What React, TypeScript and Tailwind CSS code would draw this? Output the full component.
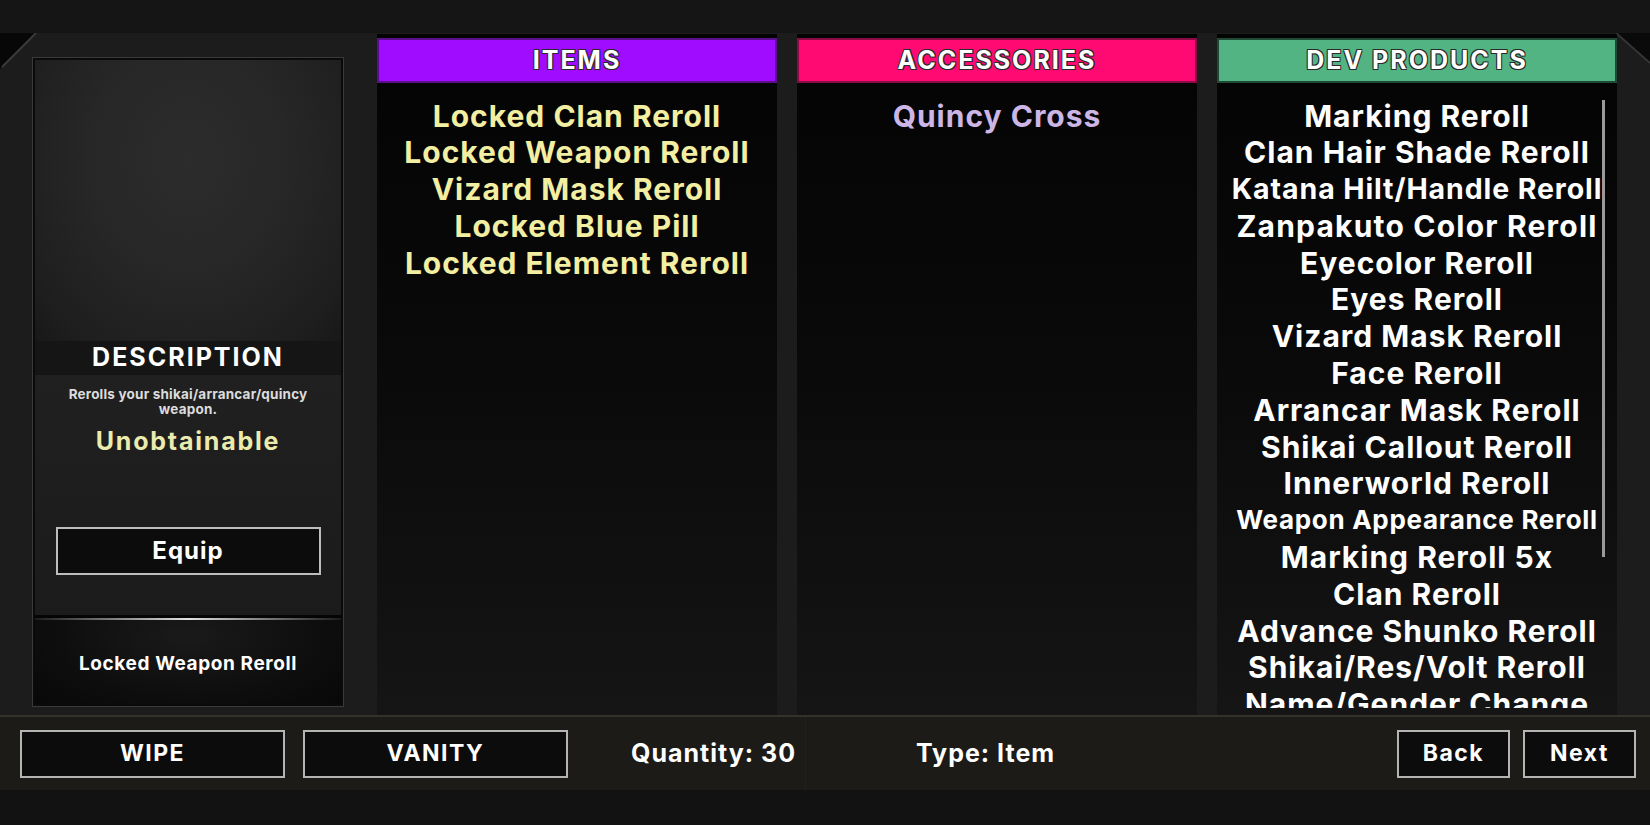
import React from "react";

type Row = { label: string; size?: number; track?: number };

const ITEMS: Row[] = [
  { label: "Locked Clan Reroll" },
  { label: "Locked Weapon Reroll" },
  { label: "Vizard Mask Reroll" },
  { label: "Locked Blue Pill" },
  { label: "Locked Element Reroll" },
];

const ACCESSORIES: Row[] = [{ label: "Quincy Cross" }];

const DEV: Row[] = [
  { label: "Marking Reroll" },
  { label: "Clan Hair Shade Reroll" },
  { label: "Katana Hilt/Handle Reroll", size: 28.5, track: 0.9 },
  { label: "Zanpakuto Color Reroll", size: 30, track: 1.2 },
  { label: "Eyecolor Reroll" },
  { label: "Eyes Reroll" },
  { label: "Vizard Mask Reroll" },
  { label: "Face Reroll" },
  { label: "Arrancar Mask Reroll" },
  { label: "Shikai Callout Reroll" },
  { label: "Innerworld Reroll" },
  { label: "Weapon Appearance Reroll", size: 26, track: 0.7 },
  { label: "Marking Reroll 5x" },
  { label: "Clan Reroll" },
  { label: "Advance Shunko Reroll" },
  { label: "Shikai/Res/Volt Reroll" },
  { label: "Name/Gender Change" },
];

function Column({
  title,
  head,
  rows,
  text,
  scroll,
}: {
  title: string;
  head: string;
  rows: Row[];
  text: string;
  scroll?: boolean;
}) {
  return (
    <div className="relative flex h-[681px] w-[400px] flex-col bg-gradient-to-b from-[#040404] via-[#0a0a0a] to-[#151515] pt-[4px]">
      <div
        className={`flex h-[45px] items-center justify-center border-2 text-[25px] font-bold tracking-[2px] text-white [text-shadow:-1px_-1px_0_#2a2a2a,1px_-1px_0_#2a2a2a,-1px_1px_0_#2a2a2a,1px_1px_0_#2a2a2a] ${head}`}
      >
        {title}
      </div>
      <div className="mb-[7px] flex-1 overflow-hidden pt-[14.5px]">
        {rows.map((r) => (
          <div
            key={r.label}
            className={`h-[36.8px] whitespace-nowrap text-center font-bold leading-[36.8px] ${text}`}
            style={{ fontSize: r.size ?? 30, letterSpacing: r.track ?? 1 }}
          >
            {r.label}
          </div>
        ))}
      </div>
      {scroll && (
        <div className="absolute left-[385px] top-[66px] h-[457px] w-[3px] bg-[#9a9a9a]" />
      )}
    </div>
  );
}

function BarButton({ label, w }: { label: string; w: string }) {
  return (
    <div
      className={`flex h-[48px] items-center justify-center border-2 border-[#b4b4b4] bg-[#0c0c0c] text-[23px] font-bold tracking-[1.5px] text-white ${w}`}
    >
      {label}
    </div>
  );
}

export default function App() {
  return (
    <div className="flex h-[825px] w-[1650px] flex-col overflow-hidden bg-[#121212] font-[Inter,'Noto_Sans',sans-serif]">
      <div className="h-[33px] bg-[#151515]" />

      <main className="relative flex h-[682px] bg-[#1c1c1c]">
        {/* corner trims */}
        <svg className="absolute left-0 top-0" width="40" height="50" viewBox="0 0 40 50">
          <polygon points="0,0 36,0 0,36" fill="#070707" />
          <line x1="36" y1="0" x2="2" y2="34" stroke="#3a3a3a" strokeWidth="2" />
        </svg>
        <svg className="absolute right-0 top-0" width="34" height="60" viewBox="0 0 34 60">
          <polygon points="0,0 34,0 34,30" fill="#0a0a0a" />
          <line x1="0" y1="0" x2="34" y2="30" stroke="#353535" strokeWidth="2" />
        </svg>

        {/* item preview / description */}
        <section className="ml-[33px] mt-[25px] flex h-[648px] w-[310px] flex-col border-2 border-[#0a0a0a] shadow-[0_0_0_1px_#3a3a3a]">
          <div className="h-[281px] bg-[radial-gradient(ellipse_at_50%_35%,#2c2c2c_0%,#272727_45%,#1e1e1e_85%,#181818_100%)]" />
          <div className="flex h-[34px] items-center justify-center bg-[#151515] text-[25px] font-bold tracking-[2px] text-white">
            DESCRIPTION
          </div>
          <div className="flex h-[240px] flex-col items-center bg-gradient-to-b from-[#202020] to-[#1b1b1b] pt-[12px]">
            <p className="w-[280px] text-center text-[13.5px] font-bold leading-[15px] tracking-[0.2px] text-[#dcdcdc]">
              Rerolls your shikai/arrancar/quincy weapon.
            </p>
            <p className="mt-[9px] text-[25px] font-bold leading-[30px] tracking-[1.8px] text-[#ecebae]">
              Unobtainable
            </p>
            <div className="mt-[71px] flex h-[48px] w-[265px] items-center justify-center border-2 border-[#bdbdbd] bg-[#0c0c0c] text-[24px] font-bold tracking-[1px] text-white">
              Equip
            </div>
          </div>
          <div className="h-[3px] bg-[#050505]" />
          <div className="h-[2px] bg-gradient-to-r from-transparent via-[#e0e0e0] to-transparent" />
          <div className="flex flex-1 items-center justify-center bg-[radial-gradient(ellipse_at_50%_20%,#1a1a1a_0%,#0e0e0e_60%,#080808_100%)] pt-[4px] text-[19px] font-bold tracking-[0.6px] text-white">
            Locked Weapon Reroll
          </div>
        </section>

        {/* shop columns */}
        <div className="ml-[34px] mt-[1px] flex gap-[20px]">
          <Column
            title="ITEMS"
            head="border-[#5b0f8c] bg-[#a00cff]"
            rows={ITEMS}
            text="text-[#f2eea2]"
          />
          <Column
            title="ACCESSORIES"
            head="border-[#8c0a45] bg-[#fe0a72]"
            rows={ACCESSORIES}
            text="text-[#cbb6e6]"
          />
          <Column
            title="DEV PRODUCTS"
            head="border-[#1f4a35] bg-[#52b483]"
            rows={DEV}
            text="text-white"
            scroll
          />
        </div>
      </main>

      {/* bottom bar */}
      <footer className="flex h-[75px] border-t-2 border-[#34332b] bg-[#1c1b17]">
        <div className="flex w-[805px] items-center gap-[18px] pl-[20px]">
          <BarButton label="WIPE" w="w-[265px]" />
          <BarButton label="VANITY" w="w-[265px]" />
          <span className="ml-[45px] whitespace-nowrap text-[25px] font-bold tracking-[1px] text-white">
            Quantity: 30
          </span>
        </div>
        <div className="flex flex-1 items-center border-l border-[#22211c] pl-[110px]">
          <span className="whitespace-nowrap text-[25px] font-bold tracking-[1px] text-white">Type: Item</span>
          <div className="ml-auto mr-[14px] flex gap-[13px]">
            <BarButton label="Back" w="w-[113px]" />
            <BarButton label="Next" w="w-[113px]" />
          </div>
        </div>
      </footer>
      <div className="flex-1 bg-[#121212]" />
    </div>
  );
}
